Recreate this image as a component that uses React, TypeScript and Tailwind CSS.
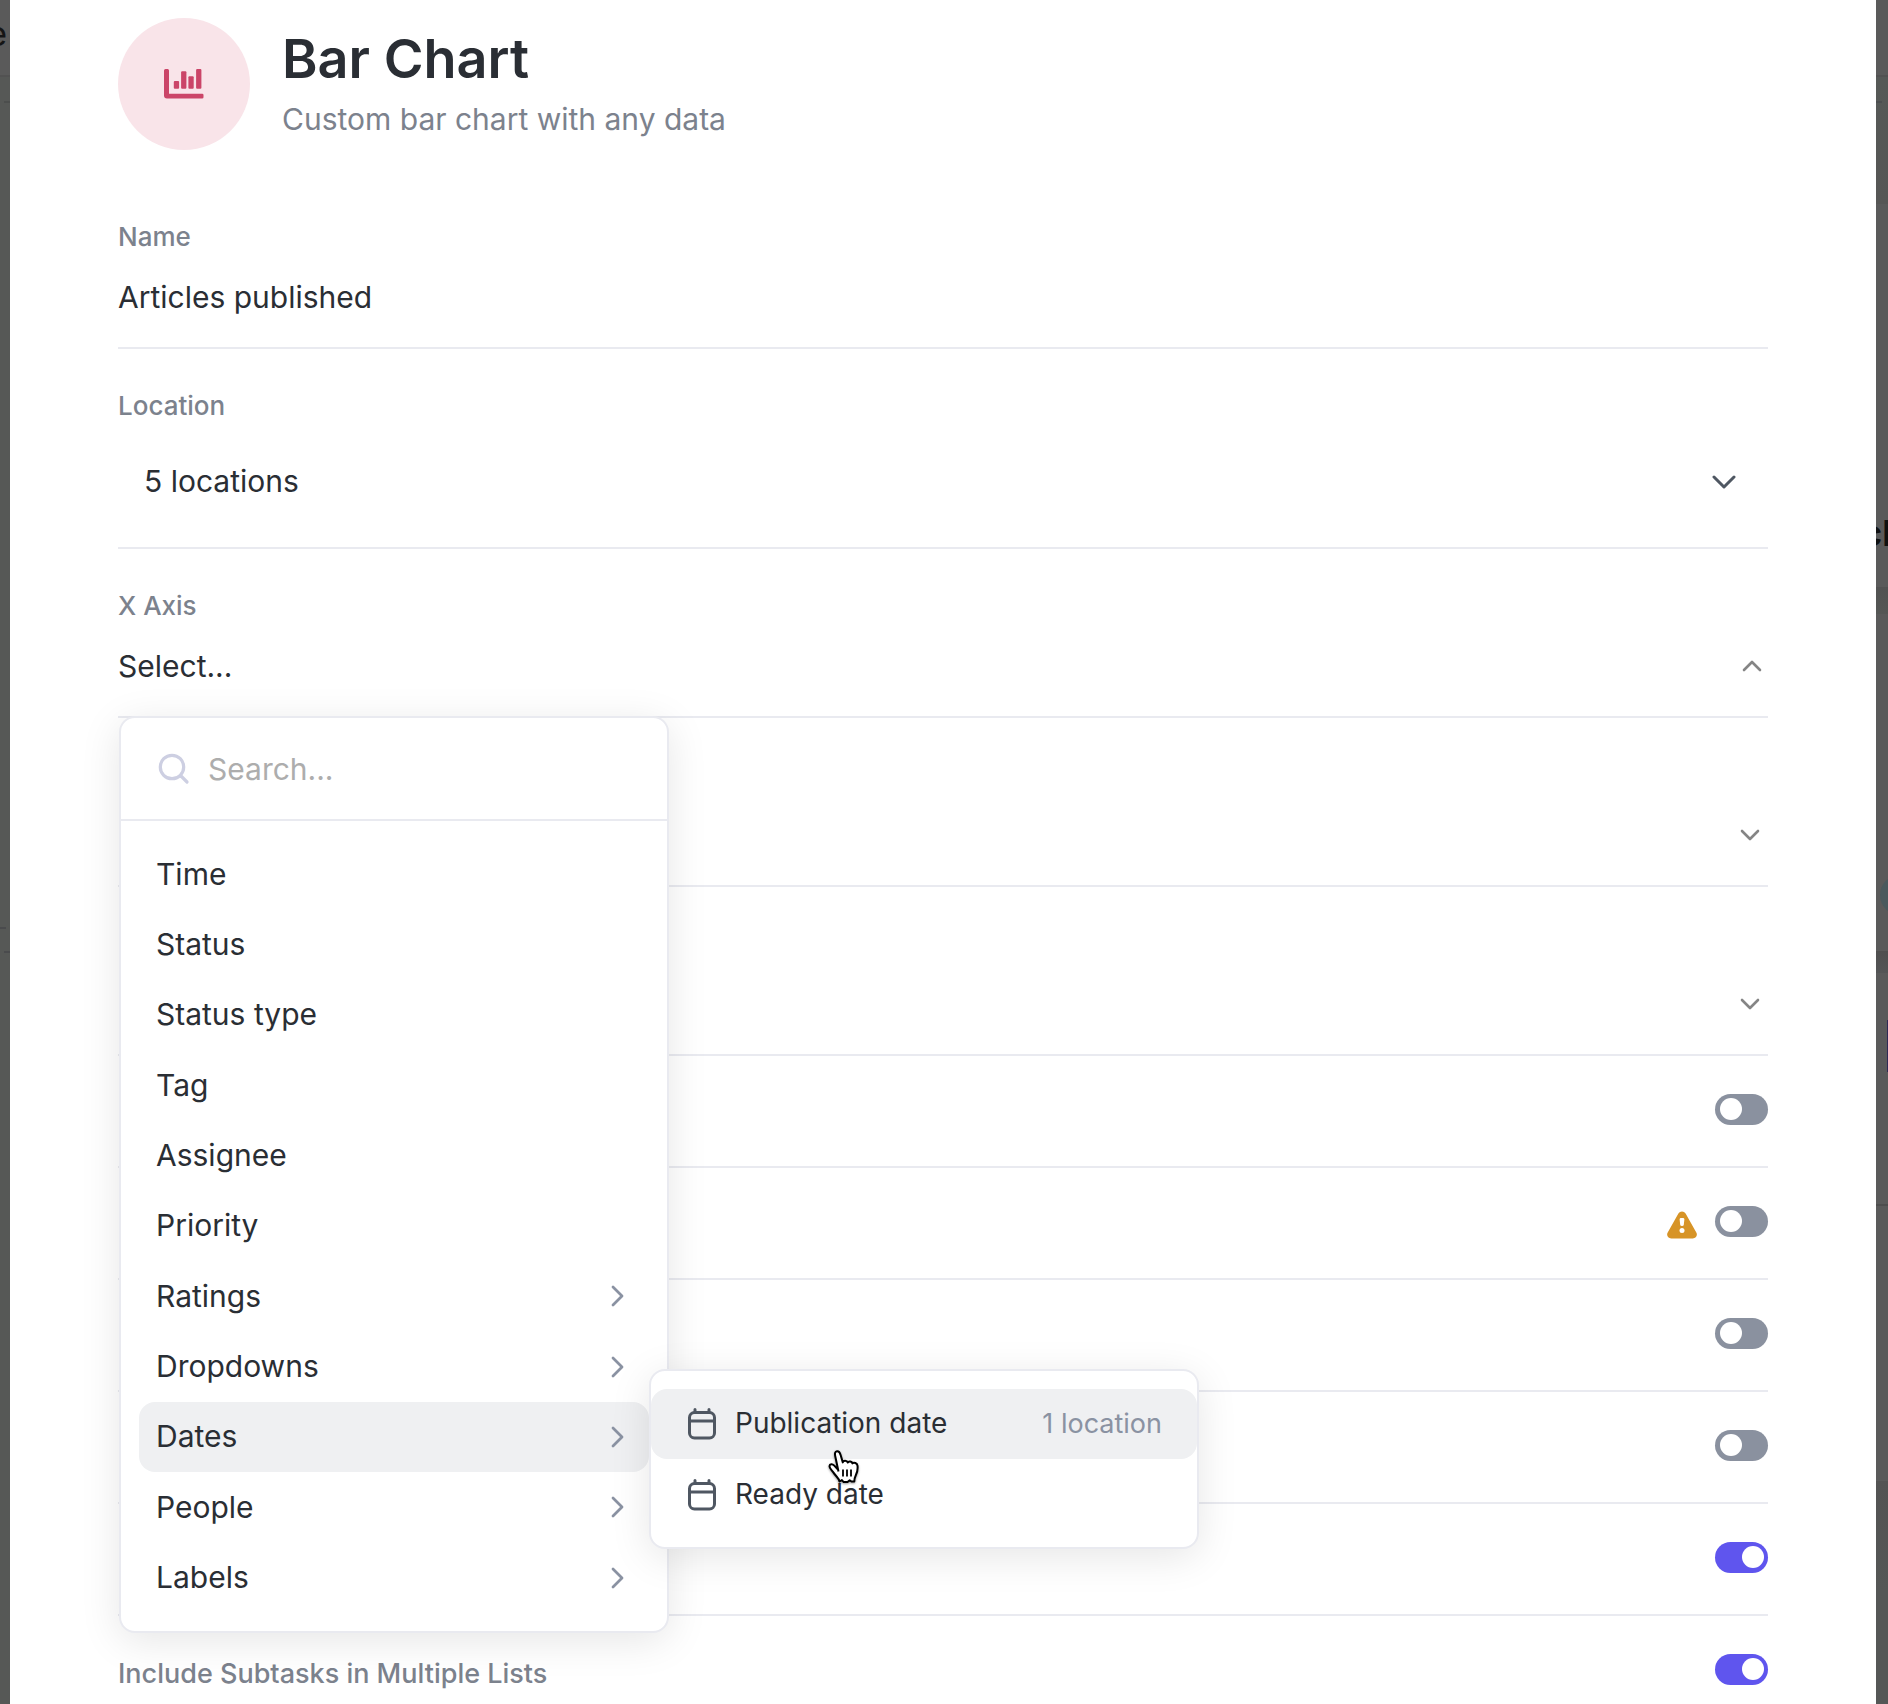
import React from "react";

const ink = "text-[#2a2e34]";

function ChartIcon() {
  return (
    <svg width="42" height="32" viewBox="0 0 42 32" fill="#cb4568" aria-hidden="true">
      <path d="M2.500 1h2.200Q6 1 6 2.500V25.700H39.200Q40.500 25.700 40.500 27V29.300Q40.500 30.600 39.200 30.600H4Q1 30.600 1 27.600V2.500Q1 1 2.500 1Z" />
      <rect x="10.800" y="13" width="5.300" height="7.700" rx="1" />
      <rect x="18.100" y="3.200" width="5.300" height="17.500" rx="1" />
      <rect x="25.400" y="8.200" width="5.300" height="12.500" rx="1" />
      <rect x="33.100" y="1" width="5.300" height="19.700" rx="1" />
    </svg>
  );
}

function Chevron({ d, w, h, color, stroke }: { d: string; w: number; h: number; color: string; stroke: number }) {
  return (
    <svg width={w} height={h} viewBox={`0 0 ${w} ${h}`} fill="none" stroke={color} strokeWidth={stroke} strokeLinecap="round" strokeLinejoin="round" aria-hidden="true">
      <path d={d} />
    </svg>
  );
}

function CalendarIcon() {
  return (
    <svg width="28" height="32" viewBox="0 0 28 32" fill="none" stroke="#4f5762" strokeWidth="3" strokeLinecap="round" aria-hidden="true">
      <rect x="1.500" y="4.500" width="25" height="25.500" rx="5" />
      <path d="M1.500 13h25M7 1.500v3M21 1.500v3" />
    </svg>
  );
}

function WarningIcon() {
  return (
    <svg width="30" height="28" viewBox="0 0 30 28" aria-hidden="true">
      <path d="M11.400 2.500C13 -.2 17 -.2 18.600 2.500L29.300 21.500C30.900 24.300 29 27.500 25.800 27.500H4.200C1 27.500-.9 24.300.7 21.500Z" fill="#d79427" />
      <path d="M12.600 8.300Q12.700 7 14 7h2q1.300 0 1.400 1.300l-.6 5.400q-.1 1.300-1.800 1.300t-1.800-1.300Z" fill="#fff" />
      <circle cx="15" cy="19.500" r="2.500" fill="#fff" />
    </svg>
  );
}

function HandCursor() {
  return (
    <svg width="32" height="36" viewBox="0 0 32 36" aria-hidden="true" className="drop-shadow-[0_1px_1px_rgba(0,0,0,0.4)]">
      <path
        d="M10.500 21.500 7.300 6.500C6.600 3.200 7 1.500 9 1.300c2-.2 2.900 1.200 3.600 3.700l2.200 7.400c.3-2.200 4.200-2.500 5 .2.800-1.800 4.100-1.500 4.700.8 1.300-1.300 4.600-.6 5 2.200.4 3.400-.3 6.900-1.700 9.700-.9 1.900-1.500 3.700-1.500 6.200h-2.800l-1.800-1.200-2.200 1.800h-3.800l-1.800-2-2.400 1.400C10.800 28 8 26.500 5.500 22.600 3.800 20 1.300 18.400 1.500 16c.2-2.300 3-2.200 4.800-.4l3.200 3.600"
        fill="#fff"
        stroke="#000"
        strokeWidth="2"
        strokeLinejoin="round"
      />
      <path d="M15 19.500v7M19 19.500v7M23 19.500v7" stroke="#000" strokeWidth="1.800" />
    </svg>
  );
}

const options = [
  { name: "Time" },
  { name: "Status" },
  { name: "Status type" },
  { name: "Tag" },
  { name: "Assignee" },
  { name: "Priority" },
  { name: "Ratings", sub: true },
  { name: "Dropdowns", sub: true },
  { name: "Dates", sub: true, open: true },
  { name: "People", sub: true },
  { name: "Labels", sub: true },
];

const dates = [
  { name: "Publication date", note: "1 location", active: true },
  { name: "Ready date" },
];

function DatesMenu() {
  return (
    <div className="absolute left-full -top-[33px] z-20 w-[550px] rounded-2xl border-2 border-[#e9eaf0] bg-white pb-[17px] pt-[18px] shadow-[0_8px_40px_rgba(0,0,0,0.1)]">
      <ul className="flex flex-col gap-px">
        {dates.map((d) => (
          <li key={d.name}>
            <button type="button" className={`flex h-[70px] w-full items-center rounded-2xl pl-[37px] pr-[35px] text-left ${ink} ${d.active ? "bg-[#eff0f2]" : ""}`}>
              <CalendarIcon />
              <span className="ml-[19px] pb-0.5 text-[28px]">{d.name}</span>
              {d.note && <span className="ml-auto text-[27px] text-[#8a92a2]">{d.note}</span>}
            </button>
          </li>
        ))}
      </ul>
      <div className="pointer-events-none absolute left-[177px] top-[79px]">
        <HandCursor />
      </div>
    </div>
  );
}

function AxisMenu() {
  return (
    <div className="absolute left-px top-full z-10 w-[550px] rounded-2xl border-2 border-[#e9eaf0] bg-white shadow-[0_8px_40px_rgba(0,0,0,0.1)]">
      <label className="flex h-[103px] items-center gap-[18px] border-b-2 border-[#e9eaf0] px-[37px]">
        <svg width="32" height="32" viewBox="0 0 32 32" fill="none" stroke="#cdcfe2" strokeWidth="3.200" strokeLinecap="round" aria-hidden="true">
          <circle cx="14" cy="14" r="11.700" />
          <path d="M23 23l6 6" />
        </svg>
        <input type="text" aria-label="Search" placeholder="Search..." className="min-w-0 flex-1 bg-transparent pt-0.5 text-[30px] outline-none placeholder:text-[#adadad]" />
      </label>
      <ul className="grid h-[810px] auto-rows-fr px-[18px] pb-[18px] pt-[18px]">
        {options.map((o) => (
          <li key={o.name} className="relative">
            <button type="button" className={`flex h-[70px] w-full items-center justify-between rounded-2xl pl-[17px] pr-6 text-left text-[30px] ${ink} ${o.open ? "bg-[#eff0f2]" : ""}`}>
              {o.name}
              {o.sub && <Chevron d="M2 2l9 9-9 9" w={14} h={22} color="#8a92a2" stroke={2.8} />}
            </button>
            {o.open && <DatesMenu />}
          </li>
        ))}
      </ul>
    </div>
  );
}

function Section({ label, tall, children }: { label: React.ReactNode; tall?: boolean; children: React.ReactNode }) {
  return (
    <section className={`relative border-b-2 border-[#e9eaf0] pt-10 ${tall ? "pb-2" : "pb-[7px]"}`}>
      <div className="flex h-[34px] text-[26px] font-medium leading-[34px] text-[#7c828d]">{label}</div>
      {children}
    </section>
  );
}

function ToggleRow({ name, label, on, warn }: { name: string; label?: string; on?: boolean; warn?: boolean }) {
  return (
    <div className="flex h-28 items-center justify-between border-b-2 border-[#e9eaf0] pb-1">
      <label htmlFor={name} className="pt-2.5 text-[27px] font-medium text-[#7c828d]">{label}</label>
      <div className="flex items-center gap-[18px]">
        {warn && <span className="mt-2"><WarningIcon /></span>}
        <input
          id={name}
          type="checkbox"
          role="switch"
          aria-label={label ?? name}
          defaultChecked={on}
          className="h-[31px] w-[53px] appearance-none rounded-full bg-[#8a919f] px-[5px] py-1 before:block before:size-[22px] before:rounded-full before:bg-white checked:bg-[#5f55ee] checked:before:ml-[22px]"
        />
      </div>
    </div>
  );
}

function LeftBackdrop() {
  return (
    <div aria-hidden="true" className="flex w-2.5 shrink-0 flex-col overflow-hidden bg-[#565856]">
      <div className="flex h-[77px] justify-end border-b-2 border-[#525252] bg-[#5a5a5a] pr-[3px] pt-3.5 text-[34px] leading-[40px] text-[#151515]">e</div>
      <div className="mt-6 h-0.5 w-1.5 self-end bg-[#4c4e4d]" />
      <div className="mt-[824px] h-0.5 w-1.5 bg-[#4a4b4d]" />
      <div className="mt-[22px] h-0.5 w-1.5 self-end bg-[#4a4b4d]" />
    </div>
  );
}

function RightBackdrop() {
  return (
    <div aria-hidden="true" className="flex w-3 shrink-0 flex-col overflow-hidden bg-[#5a5a5a]">
      <div className="h-[77px] shrink-0 border-b-2 border-[#525252]" />
      <div className="h-[127px] shrink-0 bg-linear-to-b from-[#565957] to-[#565655] pt-6">
        <div className="h-0.5 w-1.5 bg-[#4c4e50]" />
      </div>
      <div className="flex h-[383px] shrink-0 items-end justify-start pb-[27px]">
        <span className="-ml-[15px] text-[36px] font-bold leading-[54px] text-[#111]">ch</span>
      </div>
      <div className="h-[27px] shrink-0 bg-linear-to-b from-[#525252] to-[#555755]" />
      <div className="mt-[261px] size-10 shrink-0 translate-x-1 rounded-full bg-[#4a595d]" />
      <div className="mt-9 h-[22px] shrink-0 bg-linear-to-b from-[#4f4f4f] to-[#545556]" />
      <div className="mt-[47px] h-[52px] w-px shrink-0 self-end bg-[#2f2a55]" />
      <div className="mt-[132px] h-0.5 shrink-0 bg-[#4e4e4e]" />
      <div className="mt-[275px] flex-1 bg-linear-to-b from-[#535353] via-[#555756] to-[#555756]" />
    </div>
  );
}

export default function App() {
  return (
    <div className="flex h-screen overflow-hidden bg-[#5a5a5a] font-['Inter',sans-serif]">
      <LeftBackdrop />
      <main className="min-w-0 flex-1 overflow-hidden bg-white px-[108px] pt-[18px]">
        <header className="mb-[30px] flex h-[132px] items-center gap-8">
          <div className="flex size-[132px] shrink-0 items-center justify-center rounded-full bg-[#f9e4e9]">
            <ChartIcon />
          </div>
          <div className="pb-1.5">
            <h1 className={`text-[54px] font-semibold leading-[68px] ${ink}`}>Bar Chart</h1>
            <p className="mt-2 text-[30px] leading-[36px] text-[#7c828d]">Custom bar chart with any data</p>
          </div>
        </header>

        <Section label={<label htmlFor="name">Name</label>}>
          <input id="name" defaultValue="Articles published" className={`block h-[86px] w-full bg-transparent text-[30px] outline-none ${ink}`} />
        </Section>

        <Section label="Location" tall>
          <button type="button" className={`flex h-[116px] w-full items-center justify-between pl-[26px] pr-8 text-[30px] ${ink}`}>
            5 locations
            <span className="pt-0.5">
              <Chevron d="M2 2l10 10 10-10" w={24} h={14} color="#4f5762" stroke={3} />
            </span>
          </button>
        </Section>

        <Section label="X Axis">
          <button type="button" aria-expanded="true" className={`flex h-[86px] w-full items-center justify-between pr-1.5 text-[30px] ${ink}`}>
            Select...
            <Chevron d="M2 10l8-8 8 8" w={20} h={12} color="#858585" stroke={2.6} />
          </button>
          <AxisMenu />
        </Section>

        {["Y Axis", "Group by"].map((name) => (
          <Section key={name} label="">
            <button type="button" aria-label={name} className="flex h-[86px] w-full items-center justify-end pr-2">
              <Chevron d="M2 2l8 8 8-8" w={20} h={12} color="#858585" stroke={2.6} />
            </button>
          </Section>
        ))}

        <ToggleRow name="Show legend" />
        <ToggleRow name="Include closed" warn />
        <ToggleRow name="Include archived" />
        <ToggleRow name="Show values" />
        <ToggleRow name="Include subtasks" on />
        <ToggleRow name="multi-lists" label="Include Subtasks in Multiple Lists" on />
      </main>
      <RightBackdrop />
    </div>
  );
}
